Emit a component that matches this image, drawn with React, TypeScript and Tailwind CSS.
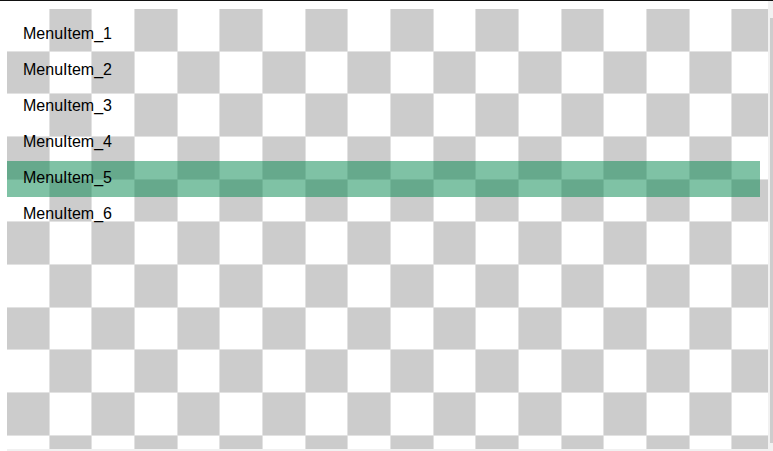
import React from "react";

const ROWS = 11;
const COLS = 18;
const items = ["MenuItem_1", "MenuItem_2", "MenuItem_3", "MenuItem_4", "MenuItem_5", "MenuItem_6"];

export default function App() {
    const cells = [];
    for (let r = 0; r < ROWS; r++) {
        for (let c = 0; c < COLS; c++) {
            const gray = (r + c) % 2 === 1;
            cells.push(
                <div
                    key={r + "-" + c}
                    className={"border-r border-b border-[#e2e2e2] " + (gray ? "bg-[#cccccc]" : "bg-white")}
                />
            );
        }
    }

    return (
        <div className="w-[773px] h-[451px] flex flex-col bg-white border-t border-[#111111] overflow-hidden font-['Liberation_Sans',Arial,sans-serif]">
            <div className="flex flex-1 min-h-0">
                <div className="relative flex flex-col flex-1 min-w-0 pt-2 pl-[7px]">
                    <div className="flex-1 min-h-0 overflow-hidden">
                        <div className="grid grid-cols-[repeat(18,42.67px)] auto-rows-[42.67px]">
                            {cells}
                        </div>
                    </div>
                    <div className="h-[2px] bg-[#f1f1f1]" />

                    <ul className="absolute left-[7px] top-4 w-[753px]">
                        {items.map((item, i) => (
                            <li
                                key={item}
                                className={
                                    "h-9 pl-4 leading-[34px] text-base text-black " +
                                    (i === 4 ? "bg-[rgba(0,134,76,0.5)]" : "")
                                }
                            >
                                {item}
                            </li>
                        ))}
                    </ul>
                </div>

                <div className="w-[5px] bg-[#f1f1f1] pt-[17px] pb-2 pl-[2px]">
                    <div className="h-full bg-[#cdcdcd]" />
                </div>
            </div>
        </div>
    );
}
